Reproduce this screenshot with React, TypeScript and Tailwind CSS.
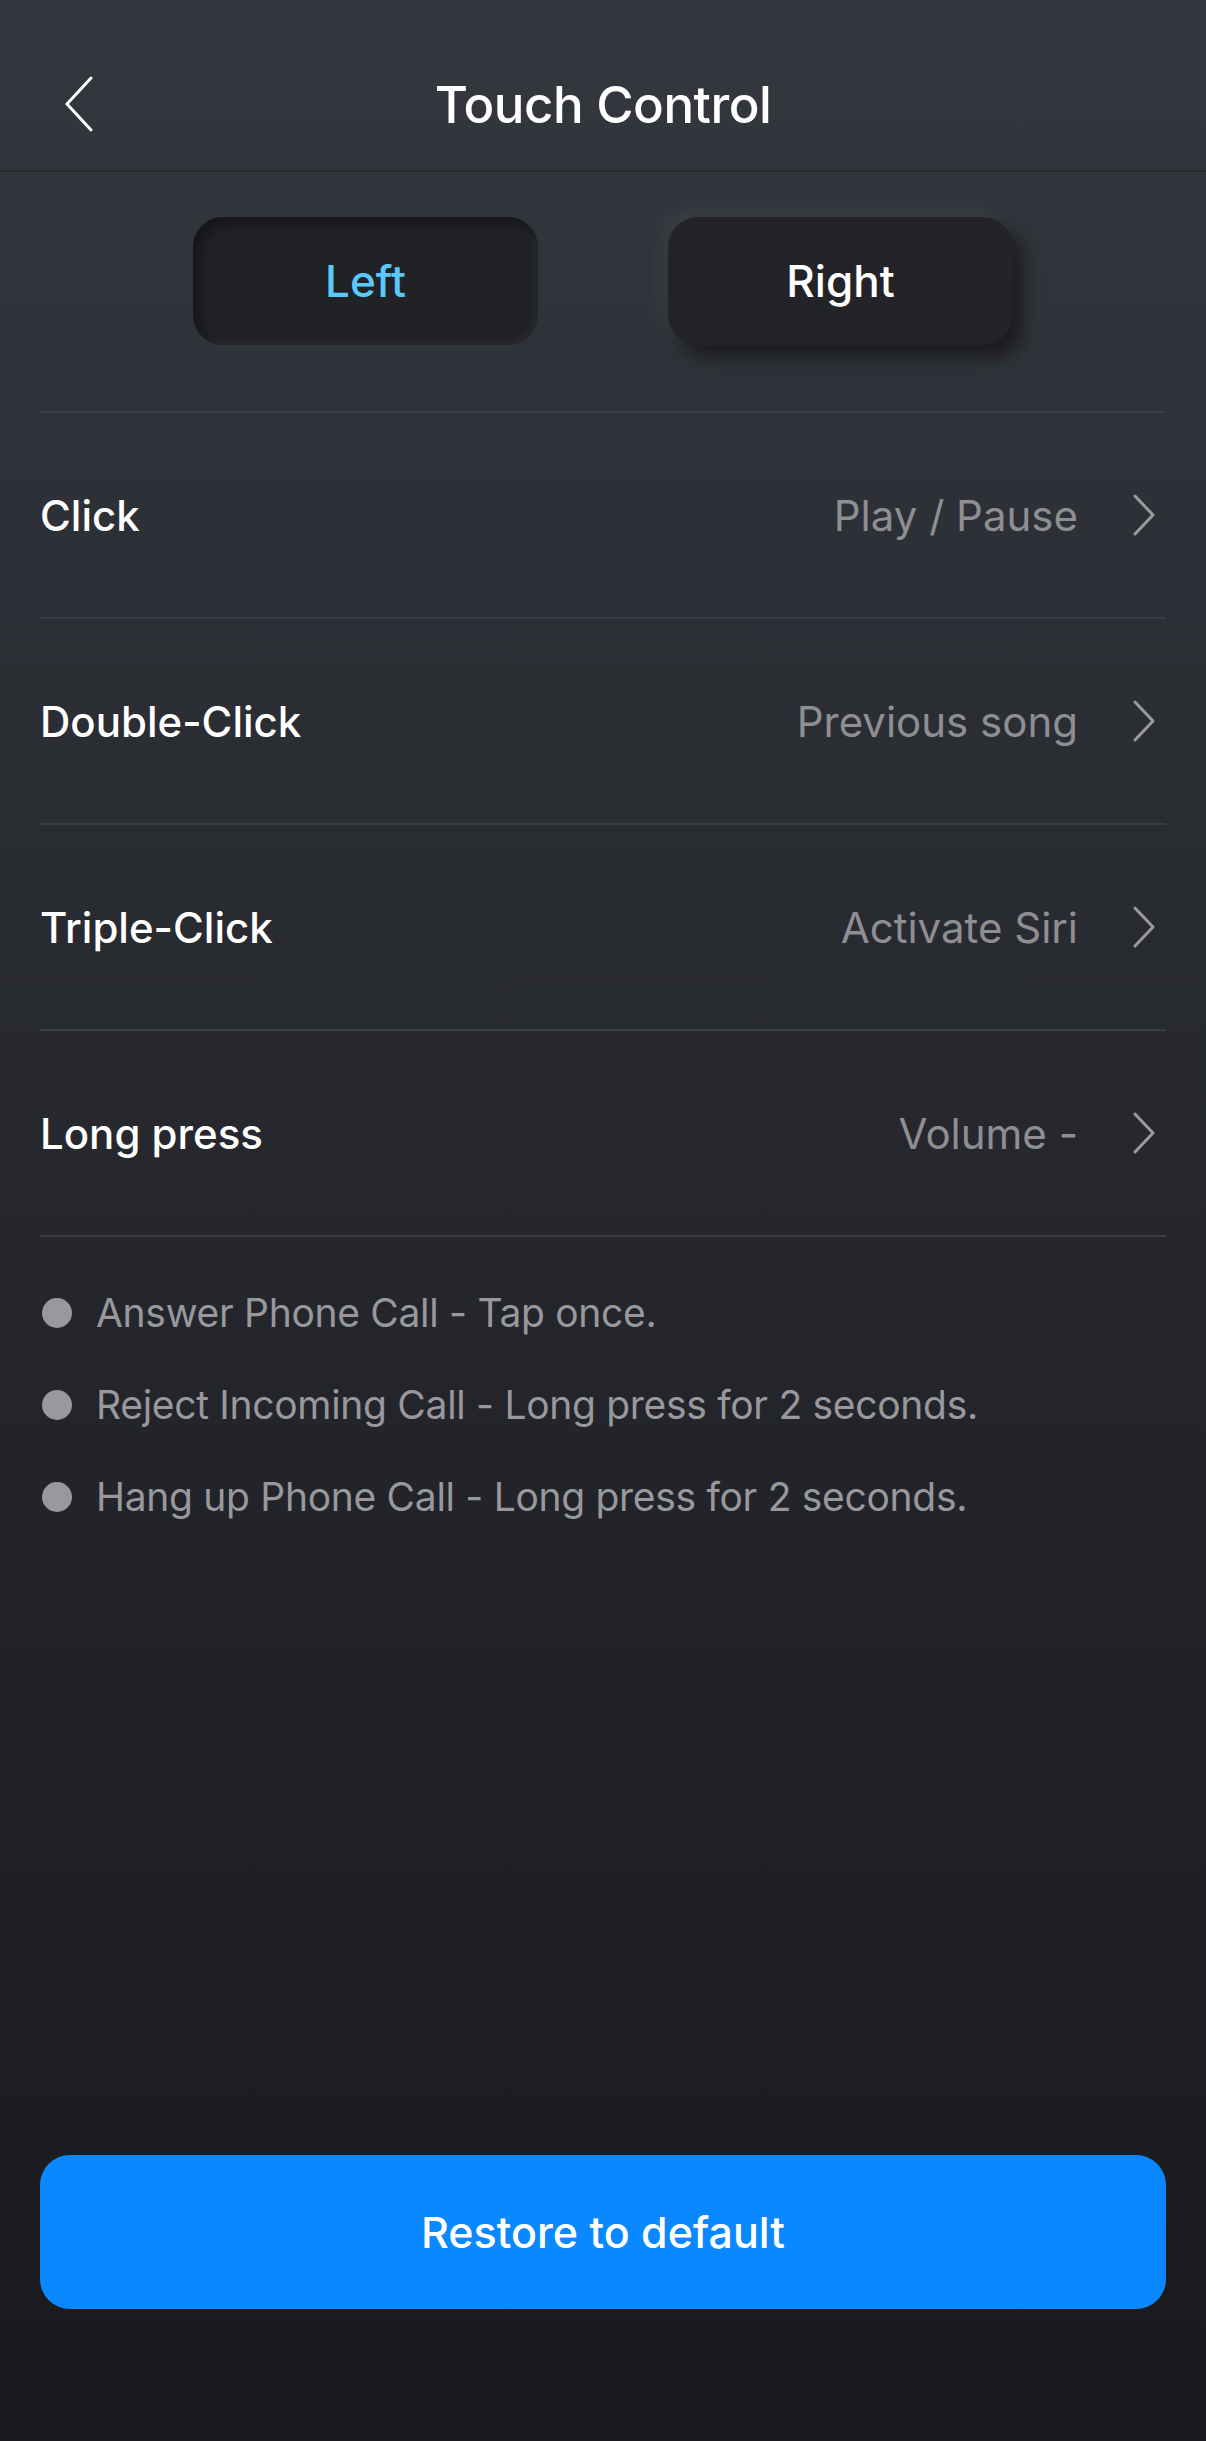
import React from "react";

const rows = [
  { label: "Click", value: "Play / Pause" },
  { label: "Double-Click", value: "Previous song" },
  { label: "Triple-Click", value: "Activate Siri" },
  { label: "Long press", value: "Volume -" },
];

const notes = [
  "Answer Phone Call - Tap once.",
  "Reject Incoming Call - Long press for 2 seconds.",
  "Hang up Phone Call - Long press for 2 seconds.",
];

function Chevron({ dir, className }: { dir: "left" | "right"; className?: string }) {
  return dir === "left" ? (
    <svg width="30" height="56" viewBox="0 0 30 56" className={className}>
      <path d="M27 2 L3 28 L27 54" fill="none" stroke="currentColor" strokeWidth="3" strokeLinecap="round" strokeLinejoin="round" />
    </svg>
  ) : (
    <svg width="24" height="42" viewBox="0 0 24 42" className={className}>
      <path d="M3 2 L21 21 L3 40" fill="none" stroke="currentColor" strokeWidth="3" strokeLinecap="round" strokeLinejoin="round" />
    </svg>
  );
}

export default function App() {
  return (
    <div
      className="min-h-[2441px] w-[1206px] flex flex-col bg-gradient-to-b from-[#34373e] via-[#25272d] to-[#191a1e] text-white"
      style={{ fontFamily: "Inter, 'Noto Sans', sans-serif" }}
    >
      {/* Header */}
      <div className="relative h-[172px] pt-[40px] flex items-center justify-center border-b-2 border-[#282a30]">
        <div className="absolute left-[64px] top-[76px] text-white">
          <Chevron dir="left" />
        </div>
        <div className="text-[51px] font-medium tracking-[-0.5px] leading-[64px]">Touch Control</div>
      </div>

      {/* Toggles */}
      <div className="flex justify-center gap-[130px] pt-[45px]">
        <div className="w-[345px] h-[128px] rounded-[30px] bg-[#202226] flex items-center justify-center shadow-[inset_8px_8px_12px_rgba(0,0,0,0.35),inset_-4px_-4px_10px_rgba(255,255,255,0.03)]">
          <span className="text-[44px] text-[#5ac8fa] font-medium">Left</span>
        </div>
        <div className="w-[345px] h-[128px] rounded-[30px] bg-[#222428] flex items-center justify-center shadow-[10px_12px_18px_rgba(0,0,0,0.45),-8px_-8px_18px_rgba(255,255,255,0.05)]">
          <span className="text-[44px] text-white font-medium">Right</span>
        </div>
      </div>

      {/* Rows */}
      <div className="mx-[40px] mt-[66px] border-b-2 border-[#3a3d44]">
        {rows.map((r) => (
          <div key={r.label} className="h-[206px] border-t-2 border-[#3a3d44] flex items-center">
            <span className="text-[42px] font-medium text-white">{r.label}</span>
            <span className="ml-auto text-[42px] text-[#8e8e93]">{r.value}</span>
            <Chevron dir="right" className="ml-[54px] mr-[10px] text-[#9a9a9f]" />
          </div>
        ))}
      </div>

      {/* Notes */}
      <div className="mx-[40px] pt-[30px]">
        {notes.map((n) => (
          <div key={n} className="h-[92px] flex items-center">
            <span className="w-[30px] h-[30px] rounded-full bg-[#98989d] ml-[2px] shrink-0" />
            <span className="ml-[24px] text-[39px] tracking-[-0.3px] text-[#98989d]">{n}</span>
          </div>
        ))}
      </div>

      <div className="flex-1" />

      {/* Button */}
      <div className="mx-[40px] mb-[132px]">
        <div className="h-[154px] rounded-[30px] bg-[#0a88ff] flex items-center justify-center">
          <span className="text-[43px] font-medium text-white">Restore to default</span>
        </div>
      </div>
    </div>
  );
}
